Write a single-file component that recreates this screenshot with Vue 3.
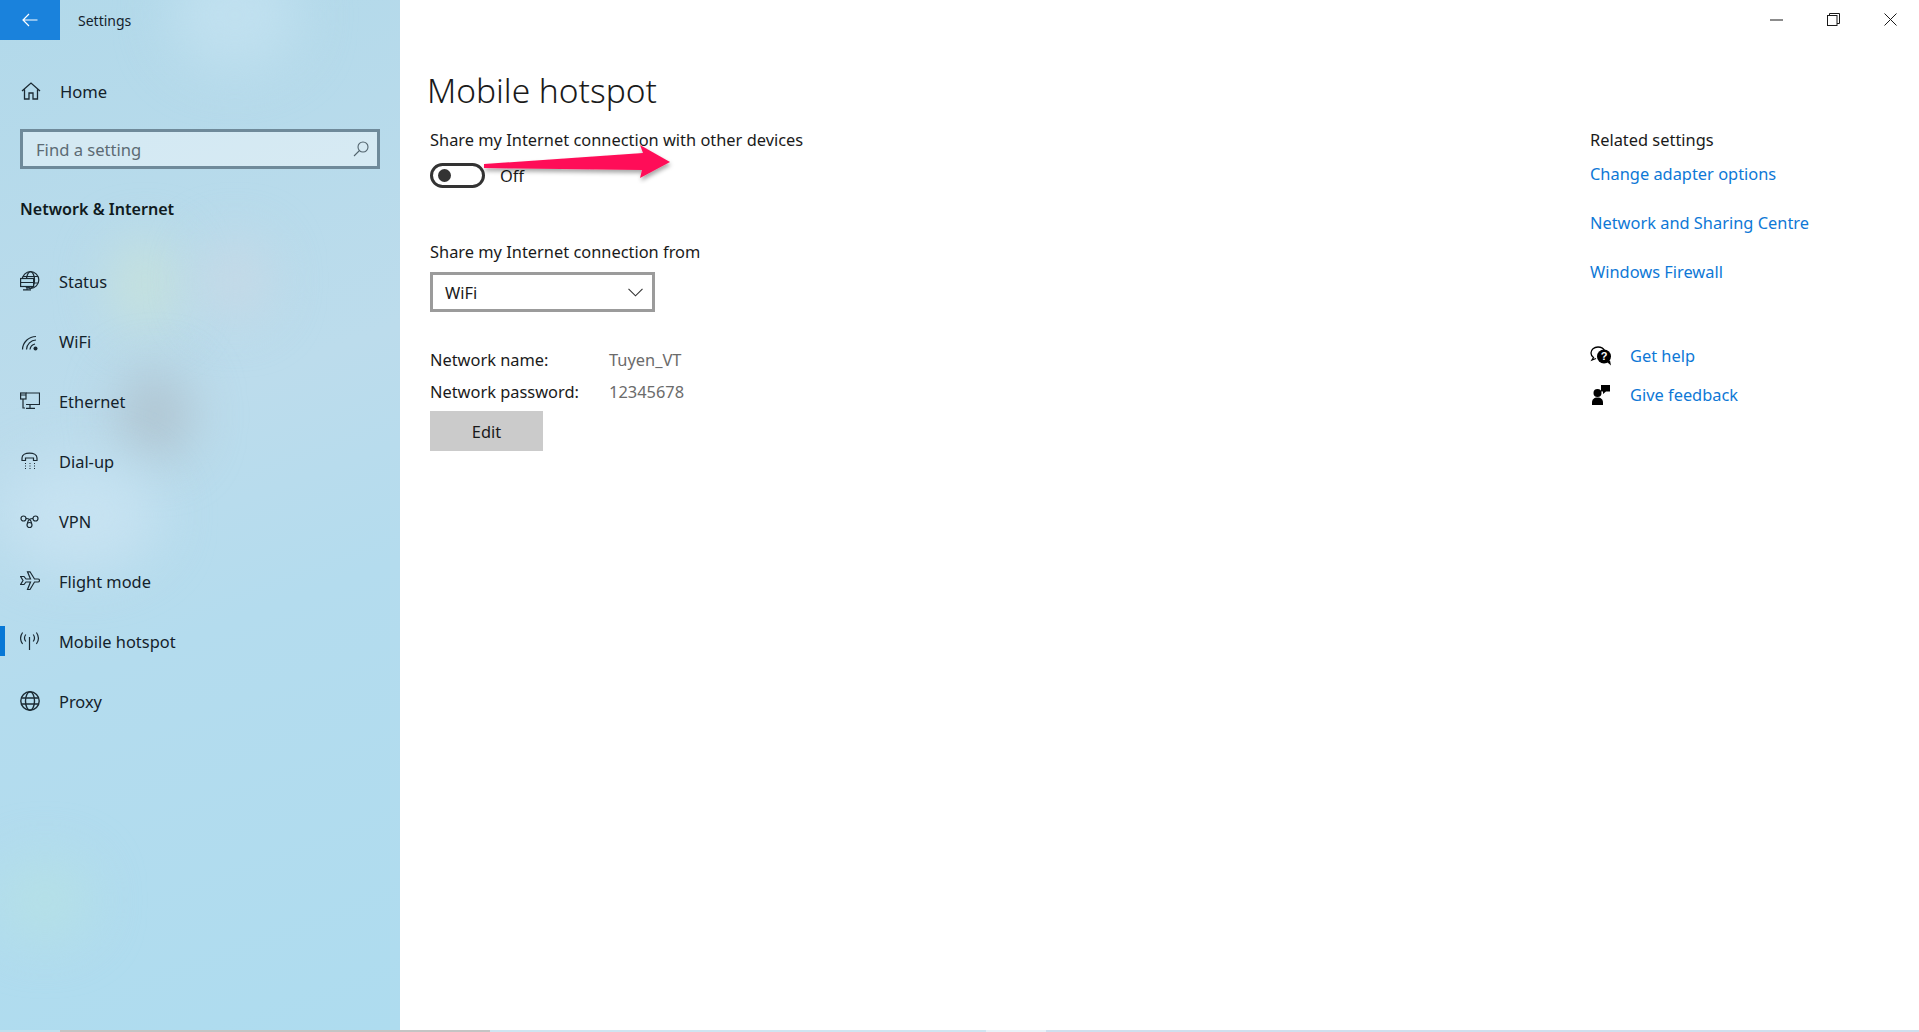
<script setup>
const navItems = [
  { label: 'Status', key: 'status' },
  { label: 'WiFi', key: 'wifi' },
  { label: 'Ethernet', key: 'ethernet' },
  { label: 'Dial-up', key: 'dialup' },
  { label: 'VPN', key: 'vpn' },
  { label: 'Flight mode', key: 'flight' },
  { label: 'Mobile hotspot', key: 'hotspot', active: true },
  { label: 'Proxy', key: 'proxy' },
]
const related = ['Change adapter options', 'Network and Sharing Centre', 'Windows Firewall']
</script>

<template>
  <div class="window">
    <aside class="sidebar">
      <div class="blob b1"></div>
      <div class="blob b2"></div>
      <div class="blob b3"></div>
      <div class="blob b4"></div>
      <div class="blob b5"></div>
      <div class="blob b6"></div>
      <div class="titlebar">
        <div class="back">
          <svg width="16" height="14" viewBox="0 0 16 14" fill="none" stroke="#fff" stroke-width="1.2"><path d="M15.5 7H1M7 1 1 7l6 6" /></svg>
        </div>
        <span class="app-title">Settings</span>
      </div>
      <div class="home">
        <svg class="icon" width="20" height="20" viewBox="0 0 20 20" fill="none" stroke="#1b2a33" stroke-width="1.3"><path d="M1 10 10 2l9 8M3.5 8.5V18H8v-6h4v6h4.500V8.500" /></svg>
        <span>Home</span>
      </div>
      <div class="search">
        <span class="placeholder">Find a setting</span>
        <svg width="16" height="16" viewBox="0 0 16 16" fill="none" stroke="#52646e" stroke-width="1.100"><circle cx="10" cy="6" r="5" /><path d="M6.500 9.500 1 15" /></svg>
      </div>
      <div class="section">Network &amp; Internet</div>
      <nav class="nav">
        <div v-for="item in navItems" :key="item.key" class="nav-item">
          <i v-if="item.active" class="marker"></i>
          <svg class="icon" width="20" height="20" viewBox="0 0 20 20" fill="none" stroke="#1b2a33" stroke-width="1.200">
            <template v-if="item.key === 'status'">
              <circle cx="10.500" cy="9" r="8.300" />
              <ellipse cx="10.500" cy="9" rx="4" ry="8.300" />
              <path d="M3 5.500h15M3 12h15" />
              <rect x="0.600" y="7.500" width="13" height="8" fill="#b4dcec" />
              <path d="M0.600 11.500h13M7 15.500v3M3 18.800h8" />
            </template>
            <template v-else-if="item.key === 'wifi'">
              <path d="M2.500 18.500A13.500 13.500 0 0 1 16 5.500M6.500 18.500A10 10 0 0 1 16 9M10 18.500A6.500 6.500 0 0 1 15 13" />
              <circle cx="15.500" cy="17.500" r="2" fill="#1b2a33" stroke="none" />
            </template>
            <template v-else-if="item.key === 'ethernet'">
              <path d="M6 2h13.500v11.500H6M10 13.500V17M6 17.300h9" />
              <rect x="0.600" y="2" width="5.400" height="6" />
              <path d="M0.600 4h5.400M3 8v9h2" />
            </template>
            <template v-else-if="item.key === 'dialup'">
              <path d="M2 7C2 .5 17 .5 17 7v2.500h-3.500V7h-8v2.500H2z" />
              <g stroke-width="1" stroke-dasharray="1 3.500">
                <path d="M5 12.500h10M5 15h10M5 17.500h10" />
              </g>
            </template>
            <template v-else-if="item.key === 'vpn'">
              <circle cx="3.500" cy="7.500" r="2.500" />
              <circle cx="15.500" cy="7.500" r="2.500" />
              <circle cx="9.500" cy="14" r="2.500" />
              <path d="M6 7.500c3 0 5 1.500 5.500 4.500M13 7.500c-3 0-5 1.500-5.500 4.500" />
            </template>
            <template v-else-if="item.key === 'flight'">
              <path d="M.6 5.500H4L6 8h4.500L7.500.8H10L14.500 8H18c2 0 2 3 0 3h-3.500L10 18.500H7.500l3-7.500H6l-2 2.500H.6L3 9.500z" />
            </template>
            <template v-else-if="item.key === 'hotspot'">
              <path d="M9.500 6v13" />
              <path d="M5.800 3.500c-1.500 2-1.500 5 0 7M13.200 3.500c1.500 2 1.500 5 0 7M2.600 1.500c-2.500 3.500-2.500 8 0 11.500M16.400 1.500c2.500 3.500 2.500 8 0 11.500" />
            </template>
            <template v-else>
              <g stroke-width="1.400">
                <circle cx="10" cy="10" r="9.200" />
                <ellipse cx="10" cy="10" rx="4.500" ry="9.200" />
                <path d="M1.500 7h17M1.500 13h17" />
              </g>
            </template>
          </svg>
          <span>{{ item.label }}</span>
        </div>
      </nav>
    </aside>

    <main class="content">
      <div class="caption">
        <svg width="13" height="2" viewBox="0 0 13 2"><rect width="13" height="1" y="0.500" fill="#1a1a1a" /></svg>
        <svg width="13" height="13" viewBox="0 0 13 13" fill="none" stroke="#1a1a1a"><rect x="0.500" y="2.500" width="9.500" height="10" /><path d="M2.500 2.500V.5h10v10h-2.500" /></svg>
        <svg width="13" height="13" viewBox="0 0 13 13" fill="none" stroke="#1a1a1a"><path d="M.5.500l12 12M12.500.500l-12 12" /></svg>
      </div>
      <div class="columns">
        <section class="main-col">
          <h1>Mobile hotspot</h1>
          <div class="label first">Share my Internet connection with other devices</div>
          <div class="toggle-row">
            <span class="toggle"><i></i></span>
            <span class="toggle-text">Off</span>
          </div>
          <div class="label from">Share my Internet connection from</div>
          <div class="select">
            <span>WiFi</span>
            <svg width="15" height="9" viewBox="0 0 15 9" fill="none" stroke="#333" stroke-width="1.100"><path d="m.5.800 7 7 7-7" /></svg>
          </div>
          <div class="info">
            <div class="info-row"><span class="k">Network name:</span><span class="v">Tuyen_VT</span></div>
            <div class="info-row"><span class="k">Network password:</span><span class="v">12345678</span></div>
          </div>
          <div class="edit">Edit</div>
        </section>
        <aside class="side-col">
          <div class="rel-title">Related settings</div>
          <a v-for="r in related" :key="r" class="rel-link">{{ r }}</a>
          <div class="help">
            <div class="help-row">
              <svg width="22" height="20" viewBox="0 0 22 20">
                <path d="M8 1C4 1 1 3.500 1 7c0 2 1 3.500 2.500 4.500L2 14l4-1.500" fill="#fff" stroke="#000" stroke-width="1.300" />
                <path d="M8 1c3 0 5.500 1.500 6.500 3.500" fill="none" stroke="#000" stroke-width="1.300" />
                <circle cx="14" cy="10.500" r="7" fill="#000" />
                <path d="m17 16 4 3.500-1-5z" fill="#000" />
                <text x="14" y="14" text-anchor="middle" fill="#fff" class="q">?</text>
              </svg>
              <a>Get help</a>
            </div>
            <div class="help-row">
              <svg width="22" height="20" viewBox="0 0 22 20">
                <circle cx="7.500" cy="8" r="4" fill="#000" />
                <path d="M2 20v-2.500c0-3 2-5 5.500-5s5.500 2 5.500 5V20z" fill="#000" />
                <path d="M11 0h9v6.500h-4l-3 2.500V6.500h-2z" fill="#000" />
              </svg>
              <a>Give feedback</a>
            </div>
          </div>
        </aside>
      </div>
      <svg class="arrow" width="196" height="44" viewBox="0 0 196 44">
        <defs>
          <filter id="sh" x="-10%" y="-30%" width="120%" height="170%"><feDropShadow dx="1" dy="3" stdDeviation="2" flood-color="#000" flood-opacity=".35" /></filter>
        </defs>
        <path d="M2 24 161 13 158 5 188 22 158 38 160 30 2 28z" fill="#ff1158" filter="url(#sh)" />
      </svg>
    </main>

    <div class="strip">
      <i class="s1"></i><i class="s2"></i><i class="s3"></i><i class="s4"></i><i class="s5"></i>
    </div>
  </div>
</template>

<style>
html, body { margin: 0; background: #fff; }
</style>

<style scoped>
.window {
  position: relative;
  width: 1919px;
  height: 1032px;
  overflow: hidden;
  display: flex;
  font-family: "Noto Sans", "Open Sans", sans-serif;
  color: #1a1a1a;
  background: #fff;
}
.sidebar {
  position: relative;
  width: 400px;
  height: 1030px;
  flex: none;
  overflow: hidden;
  background: linear-gradient(160deg, #b2d9ea 0%, #bcdcec 40%, #b4dcee 60%, #aedcef 100%);
  color: #14222b;
}
.blob { position: absolute; border-radius: 50%; filter: blur(26px); }
.b1 { left: 170px; top: -40px; width: 130px; height: 110px; background: #c0e0ef; }
.b2 { left: 110px; top: 240px; width: 70px; height: 90px; background: #c6e1dc; }
.b3 { left: 200px; top: 240px; width: 70px; height: 80px; background: #c6d9e6; }
.b4 { left: 120px; top: 370px; width: 70px; height: 90px; background: #afc3cf; }
.b5 { left: 0; top: 460px; width: 160px; height: 110px; background: #c6e2f1; }
.b6 { left: 0; top: 860px; width: 90px; height: 80px; background: #b5e0e6; }
.titlebar { position: relative; display: flex; align-items: center; height: 40px; }
.back {
  width: 60px;
  height: 40px;
  background: #1a82dc;
  display: flex;
  align-items: center;
  justify-content: center;
}
.app-title { margin-left: 18px; font-size: 14px; }
.home {
  position: relative;
  display: flex;
  align-items: center;
  gap: 19px;
  height: 50px;
  margin-top: 26px;
  padding-left: 21px;
  font-size: 16.6px;
}
.search {
  position: relative;
  box-sizing: border-box;
  margin: 13px 20px 0;
  height: 40px;
  border: 3px solid #6f8a9a;
  background: rgba(255, 255, 255, .42);
  display: flex;
  align-items: center;
  justify-content: space-between;
  padding: 0 8px 0 13px;
}
.placeholder { font-size: 16.6px; color: #5c6b74; }
.section {
  position: relative;
  margin: 27px 0 0 20px;
  font-size: 16.1px;
  font-weight: 600;
  line-height: 26px;
  color: #0f1a20;
}
.nav { position: relative; margin-top: 29px; }
.nav-item {
  position: relative;
  display: flex;
  align-items: center;
  gap: 19px;
  height: 60px;
  padding-left: 20px;
  font-size: 16.4px;
}
.marker { position: absolute; left: 0; top: 15px; width: 5px; height: 30px; background: #0878d6; }
.content { position: relative; flex: 1; height: 1030px; }
.caption {
  position: absolute;
  top: 13px;
  right: 22px;
  display: flex;
  align-items: center;
  gap: 44px;
}
.columns { display: flex; padding: 0 0 0 29px; }
.main-col { width: 1161px; flex: none; font-size: 16.4px; }
h1 {
  margin: 62px 0 0 -2px;
  font-size: 33.5px;
  font-weight: 300;
  line-height: 56px;
  color: #1a1a1a;
}
.label { font-size: 16.4px; line-height: 24px; color: #1a1a1a; margin-left: 1px; }
.first { margin-top: 10px; }
.toggle-row { display: flex; align-items: center; margin: 10px 0 0 1px; height: 26px; }
.toggle {
  box-sizing: border-box;
  display: flex;
  align-items: center;
  width: 55px;
  height: 25px;
  border: 3px solid #333;
  border-radius: 13px;
  padding-left: 5px;
}
.toggle i { width: 13px; height: 13px; border-radius: 50%; background: #333; }
.toggle-text { margin-left: 15px; }
.from { margin-top: 52px; }
.select {
  box-sizing: border-box;
  width: 225px;
  height: 40px;
  margin: 8px 0 0 1px;
  border: 3px solid #9b9b9b;
  display: flex;
  align-items: center;
  justify-content: space-between;
  padding: 0 9px 0 12px;
}
.info { margin: 34px 0 0 1px; }
.info-row { display: flex; height: 32px; line-height: 28px; }
.k { width: 179px; }
.v { color: #6b6b6b; }
.edit {
  width: 113px;
  height: 40px;
  margin: 1px 0 0 1px;
  background: #cbcbcb;
  display: flex;
  align-items: center;
  justify-content: center;
}
.side-col { padding-top: 128px; font-size: 16.4px; }
.rel-title { line-height: 24px; margin-bottom: 7px; }
.rel-link { display: block; height: 49px; line-height: 30px; color: #0e78d6; }
.help { margin-top: 30px; }
.help-row { display: flex; align-items: center; height: 39px; gap: 18px; }
.help-row a { color: #0e78d6; }
.q { font-size: 11px; font-weight: 700; font-family: "Liberation Sans", sans-serif; }
.arrow { position: absolute; left: 82px; top: 140px; }
.strip { position: absolute; left: 0; right: 0; bottom: 0; height: 2px; display: flex; }
.strip i { display: block; height: 2px; }
.s1 { width: 60px; background: #bfe0ee; }
.s2 { width: 430px; background: #c4c4c4; }
.s3 { width: 496px; background: #cfe5f1; }
.s4 { width: 60px; background: #e9f2f8; }
.s5 { flex: 1; background: #cfdfee; }
</style>
